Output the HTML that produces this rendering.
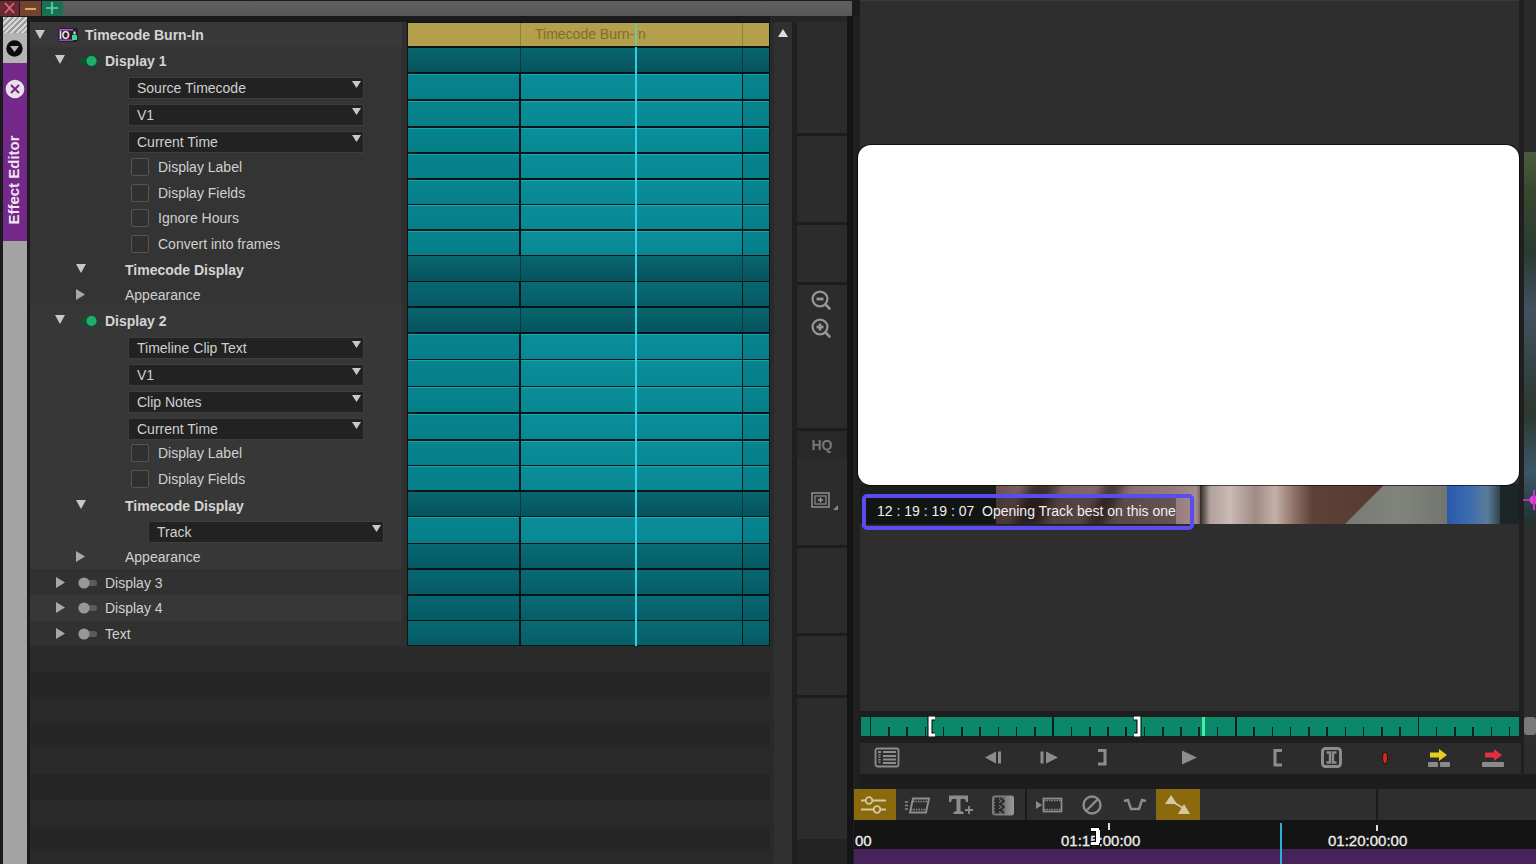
<!DOCTYPE html><html><head><meta charset="utf-8"><style>
html,body{margin:0;padding:0;width:1536px;height:864px;overflow:hidden;background:#1c1c1c;font-family:"Liberation Sans", sans-serif;}
div,svg{box-sizing:border-box}
</style></head><body>
<div style="position:absolute;left:0px;top:0px;width:860px;height:22px;background:#1b1b1b"></div>
<div style="position:absolute;left:0px;top:1px;width:19px;height:15px;background:#6c2933"></div>
<svg style="position:absolute;left:3px;top:2px" width="13" height="12"><path d="M2,1 L11,11 M11,1 L2,11" stroke="#d86a74" stroke-width="1.8"/></svg>
<div style="position:absolute;left:20px;top:1px;width:21px;height:15px;background:#70442f"></div>
<div style="position:absolute;left:25px;top:8px;width:11px;height:2px;background:#e8a070"></div>
<div style="position:absolute;left:42px;top:1px;width:21px;height:15px;background:#1a7055"></div>
<svg style="position:absolute;left:45px;top:1px" width="14" height="14"><path d="M7,1 L7,13 M1,7 L13,7" stroke="#5ed6a6" stroke-width="1.6"/></svg>
<div style="position:absolute;left:63px;top:1px;width:789px;height:15px;background:linear-gradient(#616161,#575757)"></div>
<div style="position:absolute;left:0px;top:16px;width:30px;height:848px;background:#1a1a1a"></div>
<div style="position:absolute;left:3px;top:17px;width:24px;height:16px;background:repeating-linear-gradient(135deg,#d6d6d6 0 2px,#9a9a9a 2px 4px)"></div>
<div style="position:absolute;left:3px;top:33px;width:24px;height:30px;background:#b4b4b4"></div>
<svg style="position:absolute;left:6px;top:40px" width="17" height="17"><circle cx="8.5" cy="8.5" r="8.2" fill="#0c0c0c"/><polygon points="4,6 13,6 8.5,12" fill="#b8b8b8"/></svg>
<div style="position:absolute;left:3px;top:63px;width:24px;height:178px;background:#74288a"></div>
<svg style="position:absolute;left:5px;top:79px" width="20" height="20"><circle cx="10" cy="10" r="9.3" fill="#e8e0ea"/><path d="M6,6 L14,14 M14,6 L6,14" stroke="#74288a" stroke-width="2"/></svg>
<div style="position:absolute;left:13.8px;top:179.5px;width:0;height:0"><div style="position:absolute;left:0;top:0;transform:translate(-50%,-50%) rotate(-90deg);font-size:15px;font-weight:bold;color:#efe6f2;white-space:nowrap;line-height:16px">Effect Editor</div></div>
<div style="position:absolute;left:3px;top:241px;width:24px;height:623px;background:#a3a3a3"></div>
<div style="position:absolute;left:30px;top:22px;width:377px;height:624px;background:#343434"></div>
<div style="position:absolute;left:30px;top:22px;width:377px;height:25px;background:#383838"></div>
<div style="position:absolute;left:30px;top:305px;width:377px;height:264px;background:#373737"></div>
<div style="position:absolute;left:30px;top:569px;width:377px;height:26px;background:#313131"></div>
<div style="position:absolute;left:30px;top:595px;width:377px;height:26px;background:#373737"></div>
<div style="position:absolute;left:30px;top:621px;width:377px;height:25px;background:#313131"></div>
<div style="position:absolute;left:30px;top:646px;width:742px;height:26px;background:#2a2a2a"></div>
<div style="position:absolute;left:30px;top:671.6px;width:742px;height:26px;background:#262626"></div>
<div style="position:absolute;left:30px;top:697.2px;width:742px;height:26px;background:#2a2a2a"></div>
<div style="position:absolute;left:30px;top:722.8000000000001px;width:742px;height:26px;background:#262626"></div>
<div style="position:absolute;left:30px;top:748.4000000000001px;width:742px;height:26px;background:#2a2a2a"></div>
<div style="position:absolute;left:30px;top:774.0000000000001px;width:742px;height:26px;background:#262626"></div>
<div style="position:absolute;left:30px;top:799.6000000000001px;width:742px;height:26px;background:#2a2a2a"></div>
<div style="position:absolute;left:30px;top:825.2000000000002px;width:742px;height:26px;background:#262626"></div>
<div style="position:absolute;left:30px;top:850.8000000000002px;width:742px;height:26px;background:#2a2a2a"></div>
<div style="position:absolute;left:402px;top:22px;width:5px;height:624px;background:#2f2f2f"></div>
<svg style="position:absolute;left:35px;top:29.5px" width="10" height="9"><polygon points="0,0 10,0 5.0,9" fill="#c8c8c8"/></svg>
<svg style="position:absolute;left:57px;top:27px" width="22" height="16"><rect x="1" y="1" width="20" height="14" rx="2" fill="#2a1c30"/><rect x="2" y="2" width="14" height="1.5" fill="#b060c0"/><rect x="2" y="12.5" width="14" height="1.5" fill="#9050a8"/><text x="2" y="11.5" font-family="Liberation Sans" font-weight="bold" font-size="10" fill="#f0e8f0">IO</text><rect x="15" y="8" width="5" height="5" fill="#30e080"/><rect x="16.5" y="4.5" width="2" height="3" fill="#ddd"/></svg>
<div style="position:absolute;left:85px;top:25.0px;height:20px;line-height:20px;font-size:14px;font-weight:bold;color:#d4d4d4;white-space:nowrap;">Timecode Burn-In</div>
<svg style="position:absolute;left:55px;top:55px" width="10" height="9"><polygon points="0,0 10,0 5.0,9" fill="#c8c8c8"/></svg>
<svg style="position:absolute;left:77px;top:53.5px" width="22" height="14"><rect x="2" y="4.5" width="12" height="5" rx="2.5" fill="#0c5230"/><circle cx="14.5" cy="7" r="5.8" fill="#0a5a32"/><circle cx="14.5" cy="7" r="5" fill="#1eae6a"/></svg>
<div style="position:absolute;left:105px;top:50.5px;height:20px;line-height:20px;font-size:14px;font-weight:bold;color:#d4d4d4;white-space:nowrap;">Display 1</div>
<div style="position:absolute;left:128px;top:77px;width:236px;height:22px;background:#222;border:1px solid #3d3d3d;"></div>
<div style="position:absolute;left:137px;top:77.8px;height:20px;line-height:20px;font-size:14px;font-weight:normal;color:#d0d0d0;white-space:nowrap;">Source Timecode</div>
<svg style="position:absolute;left:352px;top:81px" width="9" height="7"><polygon points="0,0 9,0 4.5,7" fill="#c8c8c8"/></svg>
<div style="position:absolute;left:128px;top:104px;width:236px;height:22px;background:#222;border:1px solid #3d3d3d;"></div>
<div style="position:absolute;left:137px;top:104.8px;height:20px;line-height:20px;font-size:14px;font-weight:normal;color:#d0d0d0;white-space:nowrap;">V1</div>
<svg style="position:absolute;left:352px;top:108px" width="9" height="7"><polygon points="0,0 9,0 4.5,7" fill="#c8c8c8"/></svg>
<div style="position:absolute;left:128px;top:131px;width:236px;height:22px;background:#222;border:1px solid #3d3d3d;"></div>
<div style="position:absolute;left:137px;top:131.8px;height:20px;line-height:20px;font-size:14px;font-weight:normal;color:#d0d0d0;white-space:nowrap;">Current Time</div>
<svg style="position:absolute;left:352px;top:135px" width="9" height="7"><polygon points="0,0 9,0 4.5,7" fill="#c8c8c8"/></svg>
<div style="position:absolute;left:131px;top:158px;width:18px;height:18px;border:1.5px solid #555;border-radius:2px;background:#303030"></div>
<div style="position:absolute;left:158px;top:157.0px;height:20px;line-height:20px;font-size:14px;font-weight:normal;color:#d0d0d0;white-space:nowrap;">Display Label</div>
<div style="position:absolute;left:131px;top:184px;width:18px;height:18px;border:1.5px solid #555;border-radius:2px;background:#303030"></div>
<div style="position:absolute;left:158px;top:183.0px;height:20px;line-height:20px;font-size:14px;font-weight:normal;color:#d0d0d0;white-space:nowrap;">Display Fields</div>
<div style="position:absolute;left:131px;top:209px;width:18px;height:18px;border:1.5px solid #555;border-radius:2px;background:#303030"></div>
<div style="position:absolute;left:158px;top:208.0px;height:20px;line-height:20px;font-size:14px;font-weight:normal;color:#d0d0d0;white-space:nowrap;">Ignore Hours</div>
<div style="position:absolute;left:131px;top:235px;width:18px;height:18px;border:1.5px solid #555;border-radius:2px;background:#303030"></div>
<div style="position:absolute;left:158px;top:234.0px;height:20px;line-height:20px;font-size:14px;font-weight:normal;color:#d0d0d0;white-space:nowrap;">Convert into frames</div>
<svg style="position:absolute;left:76px;top:264px" width="10" height="9"><polygon points="0,0 10,0 5.0,9" fill="#c8c8c8"/></svg>
<div style="position:absolute;left:125px;top:260.0px;height:20px;line-height:20px;font-size:14px;font-weight:bold;color:#d4d4d4;white-space:nowrap;">Timecode Display</div>
<svg style="position:absolute;left:76px;top:289px" width="9" height="11"><polygon points="0,0 9,5.5 0,11" fill="#a8a8a8"/></svg>
<div style="position:absolute;left:125px;top:285.0px;height:20px;line-height:20px;font-size:14px;font-weight:normal;color:#d0d0d0;white-space:nowrap;">Appearance</div>
<svg style="position:absolute;left:55px;top:315px" width="10" height="9"><polygon points="0,0 10,0 5.0,9" fill="#c8c8c8"/></svg>
<svg style="position:absolute;left:77px;top:313.5px" width="22" height="14"><rect x="2" y="4.5" width="12" height="5" rx="2.5" fill="#0c5230"/><circle cx="14.5" cy="7" r="5.8" fill="#0a5a32"/><circle cx="14.5" cy="7" r="5" fill="#1eae6a"/></svg>
<div style="position:absolute;left:105px;top:310.5px;height:20px;line-height:20px;font-size:14px;font-weight:bold;color:#d4d4d4;white-space:nowrap;">Display 2</div>
<div style="position:absolute;left:128px;top:337px;width:236px;height:22px;background:#222;border:1px solid #3d3d3d;"></div>
<div style="position:absolute;left:137px;top:337.8px;height:20px;line-height:20px;font-size:14px;font-weight:normal;color:#d0d0d0;white-space:nowrap;">Timeline Clip Text</div>
<svg style="position:absolute;left:352px;top:341px" width="9" height="7"><polygon points="0,0 9,0 4.5,7" fill="#c8c8c8"/></svg>
<div style="position:absolute;left:128px;top:364px;width:236px;height:22px;background:#222;border:1px solid #3d3d3d;"></div>
<div style="position:absolute;left:137px;top:364.8px;height:20px;line-height:20px;font-size:14px;font-weight:normal;color:#d0d0d0;white-space:nowrap;">V1</div>
<svg style="position:absolute;left:352px;top:368px" width="9" height="7"><polygon points="0,0 9,0 4.5,7" fill="#c8c8c8"/></svg>
<div style="position:absolute;left:128px;top:391px;width:236px;height:22px;background:#222;border:1px solid #3d3d3d;"></div>
<div style="position:absolute;left:137px;top:391.8px;height:20px;line-height:20px;font-size:14px;font-weight:normal;color:#d0d0d0;white-space:nowrap;">Clip Notes</div>
<svg style="position:absolute;left:352px;top:395px" width="9" height="7"><polygon points="0,0 9,0 4.5,7" fill="#c8c8c8"/></svg>
<div style="position:absolute;left:128px;top:418px;width:236px;height:22px;background:#222;border:1px solid #3d3d3d;"></div>
<div style="position:absolute;left:137px;top:418.8px;height:20px;line-height:20px;font-size:14px;font-weight:normal;color:#d0d0d0;white-space:nowrap;">Current Time</div>
<svg style="position:absolute;left:352px;top:422px" width="9" height="7"><polygon points="0,0 9,0 4.5,7" fill="#c8c8c8"/></svg>
<div style="position:absolute;left:131px;top:444px;width:18px;height:18px;border:1.5px solid #555;border-radius:2px;background:#303030"></div>
<div style="position:absolute;left:158px;top:443.0px;height:20px;line-height:20px;font-size:14px;font-weight:normal;color:#d0d0d0;white-space:nowrap;">Display Label</div>
<div style="position:absolute;left:131px;top:470px;width:18px;height:18px;border:1.5px solid #555;border-radius:2px;background:#303030"></div>
<div style="position:absolute;left:158px;top:469.0px;height:20px;line-height:20px;font-size:14px;font-weight:normal;color:#d0d0d0;white-space:nowrap;">Display Fields</div>
<svg style="position:absolute;left:76px;top:500px" width="10" height="9"><polygon points="0,0 10,0 5.0,9" fill="#c8c8c8"/></svg>
<div style="position:absolute;left:125px;top:496.0px;height:20px;line-height:20px;font-size:14px;font-weight:bold;color:#d4d4d4;white-space:nowrap;">Timecode Display</div>
<div style="position:absolute;left:148px;top:521px;width:236px;height:22px;background:#222;border:1px solid #3d3d3d;"></div>
<div style="position:absolute;left:157px;top:521.8px;height:20px;line-height:20px;font-size:14px;font-weight:normal;color:#d0d0d0;white-space:nowrap;">Track</div>
<svg style="position:absolute;left:372px;top:525px" width="9" height="7"><polygon points="0,0 9,0 4.5,7" fill="#c8c8c8"/></svg>
<svg style="position:absolute;left:76px;top:551px" width="9" height="11"><polygon points="0,0 9,5.5 0,11" fill="#a8a8a8"/></svg>
<div style="position:absolute;left:125px;top:547.0px;height:20px;line-height:20px;font-size:14px;font-weight:normal;color:#d0d0d0;white-space:nowrap;">Appearance</div>
<svg style="position:absolute;left:56px;top:577px" width="9" height="11"><polygon points="0,0 9,5.5 0,11" fill="#a8a8a8"/></svg>
<svg style="position:absolute;left:77px;top:576px" width="22" height="14"><rect x="8" y="4" width="12" height="6" rx="2.5" fill="#5a5a5a"/><circle cx="7" cy="7" r="5.6" fill="#979797"/></svg>
<div style="position:absolute;left:105px;top:573.0px;height:20px;line-height:20px;font-size:14px;font-weight:normal;color:#d0d0d0;white-space:nowrap;">Display 3</div>
<svg style="position:absolute;left:56px;top:602px" width="9" height="11"><polygon points="0,0 9,5.5 0,11" fill="#a8a8a8"/></svg>
<svg style="position:absolute;left:77px;top:601px" width="22" height="14"><rect x="8" y="4" width="12" height="6" rx="2.5" fill="#5a5a5a"/><circle cx="7" cy="7" r="5.6" fill="#979797"/></svg>
<div style="position:absolute;left:105px;top:598.0px;height:20px;line-height:20px;font-size:14px;font-weight:normal;color:#d0d0d0;white-space:nowrap;">Display 4</div>
<svg style="position:absolute;left:56px;top:628px" width="9" height="11"><polygon points="0,0 9,5.5 0,11" fill="#a8a8a8"/></svg>
<svg style="position:absolute;left:77px;top:627px" width="22" height="14"><rect x="8" y="4" width="12" height="6" rx="2.5" fill="#5a5a5a"/><circle cx="7" cy="7" r="5.6" fill="#979797"/></svg>
<div style="position:absolute;left:105px;top:624.0px;height:20px;line-height:20px;font-size:14px;font-weight:normal;color:#d0d0d0;white-space:nowrap;">Text</div>
<div style="position:absolute;left:407px;top:22px;width:363px;height:624px;background:#0b1416"></div>
<div style="position:absolute;left:408px;top:23px;width:361px;height:23px;background:#b39f4c"></div>
<div style="position:absolute;left:520px;top:23px;width:1px;height:23px;background:#8f7f3c"></div>
<div style="position:absolute;left:742px;top:23px;width:1px;height:23px;background:#8f7f3c"></div>
<div style="position:absolute;left:408px;top:48px;width:111px;height:24px;background:linear-gradient(#08646e,#05525c)"></div>
<div style="position:absolute;left:521px;top:48px;width:221px;height:24px;background:linear-gradient(#08646e,#05525c)"></div>
<div style="position:absolute;left:743px;top:48px;width:26px;height:24px;background:linear-gradient(#08646e,#05525c)"></div>
<div style="position:absolute;left:408px;top:48px;width:361px;height:24px;background:linear-gradient(#09666f,#05535d)"></div>
<div style="position:absolute;left:520px;top:48px;width:1px;height:24px;background:#0a3a40"></div>
<div style="position:absolute;left:742px;top:48px;width:1px;height:24px;background:#0a3a40"></div>
<div style="position:absolute;left:408px;top:74px;width:111px;height:25px;background:linear-gradient(#16a2ae 0,#16a2ae 1px,#08848e 1px,#057e88)"></div>
<div style="position:absolute;left:521px;top:74px;width:221px;height:25px;background:linear-gradient(#18aab6 0,#18aab6 1px,#0a8e9a 1px,#088893)"></div>
<div style="position:absolute;left:743px;top:74px;width:26px;height:25px;background:linear-gradient(#16a2ae 0,#16a2ae 1px,#08848e 1px,#057e88)"></div>
<div style="position:absolute;left:408px;top:101px;width:111px;height:25px;background:linear-gradient(#16a2ae 0,#16a2ae 1px,#08848e 1px,#057e88)"></div>
<div style="position:absolute;left:521px;top:101px;width:221px;height:25px;background:linear-gradient(#18aab6 0,#18aab6 1px,#0a8e9a 1px,#088893)"></div>
<div style="position:absolute;left:743px;top:101px;width:26px;height:25px;background:linear-gradient(#16a2ae 0,#16a2ae 1px,#08848e 1px,#057e88)"></div>
<div style="position:absolute;left:408px;top:128px;width:111px;height:24px;background:linear-gradient(#16a2ae 0,#16a2ae 1px,#08848e 1px,#057e88)"></div>
<div style="position:absolute;left:521px;top:128px;width:221px;height:24px;background:linear-gradient(#18aab6 0,#18aab6 1px,#0a8e9a 1px,#088893)"></div>
<div style="position:absolute;left:743px;top:128px;width:26px;height:24px;background:linear-gradient(#16a2ae 0,#16a2ae 1px,#08848e 1px,#057e88)"></div>
<div style="position:absolute;left:408px;top:154px;width:111px;height:24px;background:linear-gradient(#16a2ae 0,#16a2ae 1px,#08848e 1px,#057e88)"></div>
<div style="position:absolute;left:521px;top:154px;width:221px;height:24px;background:linear-gradient(#18aab6 0,#18aab6 1px,#0a8e9a 1px,#088893)"></div>
<div style="position:absolute;left:743px;top:154px;width:26px;height:24px;background:linear-gradient(#16a2ae 0,#16a2ae 1px,#08848e 1px,#057e88)"></div>
<div style="position:absolute;left:408px;top:180px;width:111px;height:24px;background:linear-gradient(#16a2ae 0,#16a2ae 1px,#08848e 1px,#057e88)"></div>
<div style="position:absolute;left:521px;top:180px;width:221px;height:24px;background:linear-gradient(#18aab6 0,#18aab6 1px,#0a8e9a 1px,#088893)"></div>
<div style="position:absolute;left:743px;top:180px;width:26px;height:24px;background:linear-gradient(#16a2ae 0,#16a2ae 1px,#08848e 1px,#057e88)"></div>
<div style="position:absolute;left:408px;top:205px;width:111px;height:24px;background:linear-gradient(#16a2ae 0,#16a2ae 1px,#08848e 1px,#057e88)"></div>
<div style="position:absolute;left:521px;top:205px;width:221px;height:24px;background:linear-gradient(#18aab6 0,#18aab6 1px,#0a8e9a 1px,#088893)"></div>
<div style="position:absolute;left:743px;top:205px;width:26px;height:24px;background:linear-gradient(#16a2ae 0,#16a2ae 1px,#08848e 1px,#057e88)"></div>
<div style="position:absolute;left:408px;top:231px;width:111px;height:24px;background:linear-gradient(#16a2ae 0,#16a2ae 1px,#08848e 1px,#057e88)"></div>
<div style="position:absolute;left:521px;top:231px;width:221px;height:24px;background:linear-gradient(#18aab6 0,#18aab6 1px,#0a8e9a 1px,#088893)"></div>
<div style="position:absolute;left:743px;top:231px;width:26px;height:24px;background:linear-gradient(#16a2ae 0,#16a2ae 1px,#08848e 1px,#057e88)"></div>
<div style="position:absolute;left:408px;top:256px;width:111px;height:25px;background:linear-gradient(#08646e,#05525c)"></div>
<div style="position:absolute;left:521px;top:256px;width:221px;height:25px;background:linear-gradient(#08646e,#05525c)"></div>
<div style="position:absolute;left:743px;top:256px;width:26px;height:25px;background:linear-gradient(#08646e,#05525c)"></div>
<div style="position:absolute;left:408px;top:256px;width:361px;height:25px;background:linear-gradient(#09666f,#05535d)"></div>
<div style="position:absolute;left:520px;top:256px;width:1px;height:25px;background:#0a3a40"></div>
<div style="position:absolute;left:742px;top:256px;width:1px;height:25px;background:#0a3a40"></div>
<div style="position:absolute;left:408px;top:282px;width:111px;height:24px;background:linear-gradient(#0a656e 0,#0a656e 1px,#076770 1px,#055a64)"></div>
<div style="position:absolute;left:521px;top:282px;width:221px;height:24px;background:linear-gradient(#0c6a74 0,#0c6a74 1px,#086a74 1px,#065e68)"></div>
<div style="position:absolute;left:743px;top:282px;width:26px;height:24px;background:linear-gradient(#0a656e 0,#0a656e 1px,#076770 1px,#055a64)"></div>
<div style="position:absolute;left:408px;top:308px;width:111px;height:24px;background:linear-gradient(#08646e,#05525c)"></div>
<div style="position:absolute;left:521px;top:308px;width:221px;height:24px;background:linear-gradient(#08646e,#05525c)"></div>
<div style="position:absolute;left:743px;top:308px;width:26px;height:24px;background:linear-gradient(#08646e,#05525c)"></div>
<div style="position:absolute;left:408px;top:308px;width:361px;height:24px;background:linear-gradient(#09666f,#05535d)"></div>
<div style="position:absolute;left:520px;top:308px;width:1px;height:24px;background:#0a3a40"></div>
<div style="position:absolute;left:742px;top:308px;width:1px;height:24px;background:#0a3a40"></div>
<div style="position:absolute;left:408px;top:334px;width:111px;height:25px;background:linear-gradient(#16a2ae 0,#16a2ae 1px,#08848e 1px,#057e88)"></div>
<div style="position:absolute;left:521px;top:334px;width:221px;height:25px;background:linear-gradient(#18aab6 0,#18aab6 1px,#0a8e9a 1px,#088893)"></div>
<div style="position:absolute;left:743px;top:334px;width:26px;height:25px;background:linear-gradient(#16a2ae 0,#16a2ae 1px,#08848e 1px,#057e88)"></div>
<div style="position:absolute;left:408px;top:360px;width:111px;height:26px;background:linear-gradient(#16a2ae 0,#16a2ae 1px,#08848e 1px,#057e88)"></div>
<div style="position:absolute;left:521px;top:360px;width:221px;height:26px;background:linear-gradient(#18aab6 0,#18aab6 1px,#0a8e9a 1px,#088893)"></div>
<div style="position:absolute;left:743px;top:360px;width:26px;height:26px;background:linear-gradient(#16a2ae 0,#16a2ae 1px,#08848e 1px,#057e88)"></div>
<div style="position:absolute;left:408px;top:387px;width:111px;height:25px;background:linear-gradient(#16a2ae 0,#16a2ae 1px,#08848e 1px,#057e88)"></div>
<div style="position:absolute;left:521px;top:387px;width:221px;height:25px;background:linear-gradient(#18aab6 0,#18aab6 1px,#0a8e9a 1px,#088893)"></div>
<div style="position:absolute;left:743px;top:387px;width:26px;height:25px;background:linear-gradient(#16a2ae 0,#16a2ae 1px,#08848e 1px,#057e88)"></div>
<div style="position:absolute;left:408px;top:414px;width:111px;height:25px;background:linear-gradient(#16a2ae 0,#16a2ae 1px,#08848e 1px,#057e88)"></div>
<div style="position:absolute;left:521px;top:414px;width:221px;height:25px;background:linear-gradient(#18aab6 0,#18aab6 1px,#0a8e9a 1px,#088893)"></div>
<div style="position:absolute;left:743px;top:414px;width:26px;height:25px;background:linear-gradient(#16a2ae 0,#16a2ae 1px,#08848e 1px,#057e88)"></div>
<div style="position:absolute;left:408px;top:441px;width:111px;height:24px;background:linear-gradient(#16a2ae 0,#16a2ae 1px,#08848e 1px,#057e88)"></div>
<div style="position:absolute;left:521px;top:441px;width:221px;height:24px;background:linear-gradient(#18aab6 0,#18aab6 1px,#0a8e9a 1px,#088893)"></div>
<div style="position:absolute;left:743px;top:441px;width:26px;height:24px;background:linear-gradient(#16a2ae 0,#16a2ae 1px,#08848e 1px,#057e88)"></div>
<div style="position:absolute;left:408px;top:466px;width:111px;height:24px;background:linear-gradient(#16a2ae 0,#16a2ae 1px,#08848e 1px,#057e88)"></div>
<div style="position:absolute;left:521px;top:466px;width:221px;height:24px;background:linear-gradient(#18aab6 0,#18aab6 1px,#0a8e9a 1px,#088893)"></div>
<div style="position:absolute;left:743px;top:466px;width:26px;height:24px;background:linear-gradient(#16a2ae 0,#16a2ae 1px,#08848e 1px,#057e88)"></div>
<div style="position:absolute;left:408px;top:492px;width:111px;height:24px;background:linear-gradient(#08646e,#05525c)"></div>
<div style="position:absolute;left:521px;top:492px;width:221px;height:24px;background:linear-gradient(#08646e,#05525c)"></div>
<div style="position:absolute;left:743px;top:492px;width:26px;height:24px;background:linear-gradient(#08646e,#05525c)"></div>
<div style="position:absolute;left:408px;top:492px;width:361px;height:24px;background:linear-gradient(#09666f,#05535d)"></div>
<div style="position:absolute;left:520px;top:492px;width:1px;height:24px;background:#0a3a40"></div>
<div style="position:absolute;left:742px;top:492px;width:1px;height:24px;background:#0a3a40"></div>
<div style="position:absolute;left:408px;top:517px;width:111px;height:26px;background:linear-gradient(#16a2ae 0,#16a2ae 1px,#08848e 1px,#057e88)"></div>
<div style="position:absolute;left:521px;top:517px;width:221px;height:26px;background:linear-gradient(#18aab6 0,#18aab6 1px,#0a8e9a 1px,#088893)"></div>
<div style="position:absolute;left:743px;top:517px;width:26px;height:26px;background:linear-gradient(#16a2ae 0,#16a2ae 1px,#08848e 1px,#057e88)"></div>
<div style="position:absolute;left:408px;top:544px;width:111px;height:24px;background:linear-gradient(#0a656e 0,#0a656e 1px,#076770 1px,#055a64)"></div>
<div style="position:absolute;left:521px;top:544px;width:221px;height:24px;background:linear-gradient(#0c6a74 0,#0c6a74 1px,#086a74 1px,#065e68)"></div>
<div style="position:absolute;left:743px;top:544px;width:26px;height:24px;background:linear-gradient(#0a656e 0,#0a656e 1px,#076770 1px,#055a64)"></div>
<div style="position:absolute;left:408px;top:570px;width:111px;height:24px;background:linear-gradient(#0a656e 0,#0a656e 1px,#076770 1px,#055a64)"></div>
<div style="position:absolute;left:521px;top:570px;width:221px;height:24px;background:linear-gradient(#0c6a74 0,#0c6a74 1px,#086a74 1px,#065e68)"></div>
<div style="position:absolute;left:743px;top:570px;width:26px;height:24px;background:linear-gradient(#0a656e 0,#0a656e 1px,#076770 1px,#055a64)"></div>
<div style="position:absolute;left:408px;top:596px;width:111px;height:24px;background:linear-gradient(#0a656e 0,#0a656e 1px,#076770 1px,#055a64)"></div>
<div style="position:absolute;left:521px;top:596px;width:221px;height:24px;background:linear-gradient(#0c6a74 0,#0c6a74 1px,#086a74 1px,#065e68)"></div>
<div style="position:absolute;left:743px;top:596px;width:26px;height:24px;background:linear-gradient(#0a656e 0,#0a656e 1px,#076770 1px,#055a64)"></div>
<div style="position:absolute;left:408px;top:621px;width:111px;height:24px;background:linear-gradient(#0a656e 0,#0a656e 1px,#076770 1px,#055a64)"></div>
<div style="position:absolute;left:521px;top:621px;width:221px;height:24px;background:linear-gradient(#0c6a74 0,#0c6a74 1px,#086a74 1px,#065e68)"></div>
<div style="position:absolute;left:743px;top:621px;width:26px;height:24px;background:linear-gradient(#0a656e 0,#0a656e 1px,#076770 1px,#055a64)"></div>
<div style="position:absolute;left:535px;top:24.0px;height:20px;line-height:20px;font-size:14px;font-weight:normal;color:#7e6e30;white-space:nowrap;">Timecode Burn-In</div>
<div style="position:absolute;left:635px;top:23px;width:2px;height:23px;background:#7cc0a0"></div>
<div style="position:absolute;left:635px;top:47px;width:2px;height:599px;background:#2ed0e8"></div>
<div style="position:absolute;left:770px;top:16px;width:90px;height:848px;background:#252525"></div>
<div style="position:absolute;left:770px;top:22px;width:4px;height:842px;background:#2a2a2a"></div>
<div style="position:absolute;left:774px;top:22px;width:18px;height:842px;background:#303030"></div>
<svg style="position:absolute;left:778px;top:29px" width="10" height="9"><polygon points="5,0 10,8 0,8" fill="#dcdcdc"/></svg>
<div style="position:absolute;left:792px;top:22px;width:5px;height:842px;background:#1f1f1f"></div>
<div style="position:absolute;left:797px;top:22px;width:50px;height:842px;background:#2c2c2c"></div>
<div style="position:absolute;left:797px;top:133px;width:50px;height:3px;background:#1d1d1d"></div>
<div style="position:absolute;left:797px;top:222px;width:50px;height:3px;background:#1d1d1d"></div>
<div style="position:absolute;left:797px;top:282px;width:50px;height:3px;background:#1d1d1d"></div>
<div style="position:absolute;left:797px;top:428px;width:50px;height:3px;background:#1d1d1d"></div>
<div style="position:absolute;left:797px;top:545px;width:50px;height:3px;background:#1d1d1d"></div>
<div style="position:absolute;left:797px;top:633px;width:50px;height:3px;background:#1d1d1d"></div>
<div style="position:absolute;left:797px;top:695px;width:50px;height:3px;background:#1d1d1d"></div>
<div style="position:absolute;left:797px;top:431px;width:50px;height:28px;background:#282828"></div>
<div style="position:absolute;left:797px;top:436px;width:50px;text-align:center;font-size:14px;font-weight:bold;color:#777;line-height:18px">HQ</div>
<div style="position:absolute;left:797px;top:839px;width:50px;height:25px;background:#232323"></div>
<svg style="position:absolute;left:811px;top:290px" width="22" height="22"><circle cx="9" cy="9" r="7.4" fill="none" stroke="#969696" stroke-width="2.3"/><path d="M5.5,9 L12.5,9" stroke="#969696" stroke-width="2.8"/><path d="M14.5,14.5 L18.5,18.5" stroke="#969696" stroke-width="2.6" stroke-linecap="round"/></svg>
<svg style="position:absolute;left:811px;top:318px" width="22" height="22"><circle cx="9" cy="9" r="7.4" fill="none" stroke="#969696" stroke-width="2.3"/><path d="M5.5,9 L12.5,9" stroke="#969696" stroke-width="2.8"/><path d="M9,5.5 L9,12.5" stroke="#969696" stroke-width="2.8"/><path d="M14.5,14.5 L18.5,18.5" stroke="#969696" stroke-width="2.6" stroke-linecap="round"/></svg>
<svg style="position:absolute;left:810px;top:491px" width="32" height="20"><rect x="2" y="2" width="17" height="14" fill="none" stroke="#8a8a8a" stroke-width="1.6"/><rect x="5" y="5" width="11" height="8" fill="none" stroke="#8a8a8a" stroke-width="1.2"/><path d="M10.5,6.5 L10.5,11.5 M8,9 L13,9" stroke="#9a9a9a" stroke-width="1.4"/><polygon points="28,14 28,19 23,19" fill="#8a8a8a"/></svg>
<div style="position:absolute;left:847px;top:16px;width:6px;height:848px;background:#151515"></div>
<div style="position:absolute;left:853px;top:16px;width:7px;height:848px;background:#202020"></div>
<div style="position:absolute;left:860px;top:0px;width:676px;height:864px;background:#2e2e2e"></div>
<div style="position:absolute;left:860px;top:0px;width:676px;height:1px;background:#3a3a3a"></div>
<div style="position:absolute;left:860px;top:484px;width:661px;height:40px;overflow:hidden;background:#1b1f1c"><div style="position:absolute;left:136px;top:0;width:210px;height:40px;background:linear-gradient(90deg,#6a5050 0,#806668 30px,#76605e 60px,#8a7070 140px,#947a7a 175px,#a48c8c 200px,#3a2e2a 210px)"></div><div style="position:absolute;left:160px;top:-5px;width:30px;height:50px;background:#3a2c2a;filter:blur(6px);transform:skewX(-20deg)"></div><div style="position:absolute;left:235px;top:-5px;width:20px;height:50px;background:#4a3a36;filter:blur(5px);transform:skewX(-25deg)"></div><div style="position:absolute;left:340px;top:0;width:190px;height:40px;background:linear-gradient(90deg,#2e2824 0,#b0a09c 10px,#cbbab6 30px,#a08a84 55px,#c4b0a8 75px,#8c6e64 95px,#5e4238 112px,#56392f 190px)"></div><div style="position:absolute;left:0;top:0;width:587px;height:40px;background:linear-gradient(90deg,#767a72 480px,#80847c 540px,#727670 587px);clip-path:polygon(525px 0,100% 0,100% 100%,485px 100%)"></div><div style="position:absolute;left:587px;top:0;width:55px;height:40px;background:linear-gradient(90deg,#2a5aaa 0,#3a6ab0 20px,#5a7c9a 40px,#2a3c40 55px)"></div><div style="position:absolute;left:640px;top:0;width:21px;height:40px;background:#1c2626"></div></div>
<div style="position:absolute;left:1524px;top:152px;width:12px;height:372px;background:linear-gradient(#4a5c3e 0,#38482e 40px,#2c3a34 100px,#445260 160px,#2c3830 260px,#3a5868 320px,#203030 372px)"></div>
<div style="position:absolute;left:1519px;top:0px;width:5px;height:774px;background:#1f1f1f"></div>
<div style="position:absolute;left:1524px;top:0px;width:12px;height:152px;background:#2b2b2b"></div>
<svg style="position:absolute;left:1522px;top:488px" width="14" height="24"><path d="M1,12 L13,12" stroke="#d030c8" stroke-width="1.6"/><circle cx="12" cy="12" r="4.5" fill="#e040d8"/><path d="M12,2 L12,22" stroke="#d030c8" stroke-width="2"/></svg>
<div style="position:absolute;left:857px;top:144px;width:663px;height:342px;border-radius:14px;background:#000;opacity:0.6"></div>
<div style="position:absolute;left:858px;top:145px;width:661px;height:340px;border-radius:13px;background:#fff"></div>
<div style="position:absolute;left:866px;top:498px;width:310px;height:27px;background:rgba(0,0,0,0.32)"></div>
<div style="position:absolute;left:862px;top:494px;width:332px;height:36px;border:4.5px solid #5a4cf0;border-radius:5px"></div>
<div style="position:absolute;left:877px;top:501.0px;height:20px;line-height:20px;font-size:14px;font-weight:normal;color:#f0f0f0;white-space:nowrap;">12 : 19 : 19 : 07</div>
<div style="position:absolute;left:982px;top:501.0px;height:20px;line-height:20px;font-size:14px;font-weight:normal;color:#f0f0f0;white-space:nowrap;">Opening Track best on this one</div>
<div style="position:absolute;left:860px;top:711px;width:661px;height:32px;background:#1e1e1e"></div>
<div style="position:absolute;left:861px;top:717px;width:658px;height:19px;background:#0b876a"></div>
<div style="position:absolute;left:869.8000000000001px;top:717px;width:1.6px;height:19px;background:#04201a"></div>
<div style="position:absolute;left:888.0600000000001px;top:727px;width:1.6px;height:9px;background:#04201a"></div>
<div style="position:absolute;left:906.32px;top:727px;width:1.6px;height:9px;background:#04201a"></div>
<div style="position:absolute;left:924.58px;top:727px;width:1.6px;height:9px;background:#04201a"></div>
<div style="position:absolute;left:942.84px;top:727px;width:1.6px;height:9px;background:#04201a"></div>
<div style="position:absolute;left:961.1000000000001px;top:727px;width:1.6px;height:9px;background:#04201a"></div>
<div style="position:absolute;left:979.3600000000001px;top:727px;width:1.6px;height:9px;background:#04201a"></div>
<div style="position:absolute;left:997.6200000000001px;top:727px;width:1.6px;height:9px;background:#04201a"></div>
<div style="position:absolute;left:1015.8800000000001px;top:727px;width:1.6px;height:9px;background:#04201a"></div>
<div style="position:absolute;left:1034.14px;top:727px;width:1.6px;height:9px;background:#04201a"></div>
<div style="position:absolute;left:1052.4px;top:717px;width:1.6px;height:19px;background:#04201a"></div>
<div style="position:absolute;left:1070.66px;top:727px;width:1.6px;height:9px;background:#04201a"></div>
<div style="position:absolute;left:1088.92px;top:727px;width:1.6px;height:9px;background:#04201a"></div>
<div style="position:absolute;left:1107.18px;top:727px;width:1.6px;height:9px;background:#04201a"></div>
<div style="position:absolute;left:1125.44px;top:727px;width:1.6px;height:9px;background:#04201a"></div>
<div style="position:absolute;left:1143.7px;top:727px;width:1.6px;height:9px;background:#04201a"></div>
<div style="position:absolute;left:1161.96px;top:727px;width:1.6px;height:9px;background:#04201a"></div>
<div style="position:absolute;left:1180.22px;top:727px;width:1.6px;height:9px;background:#04201a"></div>
<div style="position:absolute;left:1198.48px;top:727px;width:1.6px;height:9px;background:#04201a"></div>
<div style="position:absolute;left:1216.74px;top:727px;width:1.6px;height:9px;background:#04201a"></div>
<div style="position:absolute;left:1235.0000000000002px;top:717px;width:1.6px;height:19px;background:#04201a"></div>
<div style="position:absolute;left:1253.26px;top:727px;width:1.6px;height:9px;background:#04201a"></div>
<div style="position:absolute;left:1271.5200000000002px;top:727px;width:1.6px;height:9px;background:#04201a"></div>
<div style="position:absolute;left:1289.78px;top:727px;width:1.6px;height:9px;background:#04201a"></div>
<div style="position:absolute;left:1308.0400000000002px;top:727px;width:1.6px;height:9px;background:#04201a"></div>
<div style="position:absolute;left:1326.3000000000002px;top:727px;width:1.6px;height:9px;background:#04201a"></div>
<div style="position:absolute;left:1344.5600000000002px;top:727px;width:1.6px;height:9px;background:#04201a"></div>
<div style="position:absolute;left:1362.8200000000002px;top:727px;width:1.6px;height:9px;background:#04201a"></div>
<div style="position:absolute;left:1381.0800000000002px;top:727px;width:1.6px;height:9px;background:#04201a"></div>
<div style="position:absolute;left:1399.3400000000001px;top:727px;width:1.6px;height:9px;background:#04201a"></div>
<div style="position:absolute;left:1417.6000000000001px;top:717px;width:1.6px;height:19px;background:#04201a"></div>
<div style="position:absolute;left:1435.8600000000001px;top:727px;width:1.6px;height:9px;background:#04201a"></div>
<div style="position:absolute;left:1454.1200000000001px;top:727px;width:1.6px;height:9px;background:#04201a"></div>
<div style="position:absolute;left:1472.38px;top:727px;width:1.6px;height:9px;background:#04201a"></div>
<div style="position:absolute;left:1490.64px;top:727px;width:1.6px;height:9px;background:#04201a"></div>
<div style="position:absolute;left:1508.9px;top:727px;width:1.6px;height:9px;background:#04201a"></div>
<svg style="position:absolute;left:926px;top:716px" width="11" height="21"><path d="M9,2 L4,2 L4,19 L9,19" fill="none" stroke="#000" stroke-width="5"/><path d="M9,2 L4,2 L4,19 L9,19" fill="none" stroke="#fff" stroke-width="3"/></svg>
<svg style="position:absolute;left:1132px;top:716px" width="11" height="21"><path d="M2,2 L7,2 L7,19 L2,19" fill="none" stroke="#000" stroke-width="5"/><path d="M2,2 L7,2 L7,19 L2,19" fill="none" stroke="#fff" stroke-width="3"/></svg>
<div style="position:absolute;left:1202px;top:717px;width:3px;height:19px;background:#40f0a0"></div>
<div style="position:absolute;left:1524px;top:717px;width:12px;height:18px;background:#7a7a7a;border-radius:3px"></div>
<div style="position:absolute;left:860px;top:743px;width:661px;height:31px;background:#2c2c2c"></div>
<div style="position:absolute;left:1524px;top:743px;width:12px;height:31px;background:#2c2c2c"></div>
<svg style="position:absolute;left:874px;top:747px" width="26" height="21"><rect x="1.5" y="1.5" width="23" height="18" rx="2" fill="none" stroke="#8c8c8c" stroke-width="1.8"/><rect x="4" y="4" width="3" height="2" fill="#8c8c8c"/><rect x="9" y="4" width="13" height="2" fill="#8c8c8c"/><path d="M5.5,7 L5.5,17" stroke="#8c8c8c" stroke-width="2" stroke-dasharray="1.5 1"/><rect x="9" y="8" width="13" height="2" fill="#8c8c8c"/><rect x="9" y="11.5" width="13" height="2" fill="#8c8c8c"/><rect x="9" y="15" width="13" height="2" fill="#8c8c8c"/></svg>
<svg style="position:absolute;left:985px;top:751px" width="19" height="13"><polygon points="0,6.5 11,0.5 11,12.5" fill="#8c8c8c"/><rect x="13" y="0.5" width="3" height="12" fill="#8c8c8c"/></svg>
<svg style="position:absolute;left:1040px;top:751px" width="19" height="13"><rect x="0.5" y="0.5" width="3" height="12" fill="#8c8c8c"/><polygon points="18,6.5 6,0.5 6,12.5" fill="#8c8c8c"/></svg>
<svg style="position:absolute;left:1097px;top:749px" width="11" height="17"><path d="M1,1.5 L8,1.5 L8,15 L1,15" fill="none" stroke="#8c8c8c" stroke-width="3"/></svg>
<svg style="position:absolute;left:1182px;top:750px" width="16" height="15"><polygon points="0,0.5 15,7.5 0,14.5" fill="#8c8c8c"/></svg>
<svg style="position:absolute;left:1272px;top:749px" width="11" height="18"><path d="M10,1.5 L3,1.5 L3,16 L10,16" fill="none" stroke="#8c8c8c" stroke-width="3"/></svg>
<svg style="position:absolute;left:1321px;top:747px" width="21" height="21"><rect x="1.5" y="1.5" width="18" height="18" rx="3" fill="none" stroke="#8c8c8c" stroke-width="3"/><path d="M5.5,5.5 L9,5.5 L9,15.5 L5.5,15.5 M15.5,5.5 L12,5.5 L12,15.5 L15.5,15.5" fill="none" stroke="#8c8c8c" stroke-width="2.4"/></svg>
<svg style="position:absolute;left:1381px;top:751px" width="8" height="14"><ellipse cx="4" cy="7" rx="3" ry="6" fill="#2a1010"/><ellipse cx="4" cy="7" rx="2" ry="5" fill="#d82a1a"/></svg>
<svg style="position:absolute;left:1427px;top:748px" width="24" height="20"><path d="M3,7 L14,7" stroke="#e2d020" stroke-width="5"/><polygon points="12,1 20,7 12,13" fill="#e2d020"/><rect x="1" y="14" width="10" height="5" rx="1" fill="#8a8a8a"/><rect x="13" y="14" width="10" height="5" rx="1" fill="#8a8a8a"/></svg>
<svg style="position:absolute;left:1481px;top:748px" width="24" height="20"><path d="M4,7 L15,7" stroke="#e03040" stroke-width="5"/><polygon points="13,1 21,7 13,13" fill="#e03040"/><rect x="1" y="14" width="22" height="5" rx="1" fill="#8a8a8a"/></svg>
<div style="position:absolute;left:860px;top:774px;width:676px;height:15px;background:#1d1d1d"></div>
<div style="position:absolute;left:860px;top:789px;width:676px;height:31px;background:#2e2e2e"></div>
<div style="position:absolute;left:854px;top:789px;width:42px;height:31px;background:#8a6a0c"></div>
<div style="position:absolute;left:1025px;top:789px;width:2px;height:31px;background:#1c1c1c"></div>
<div style="position:absolute;left:1156px;top:789px;width:44px;height:31px;background:#8a6a0c"></div>
<div style="position:absolute;left:1376px;top:789px;width:2px;height:31px;background:#1c1c1c"></div>
<svg style="position:absolute;left:860px;top:796px" width="28" height="19"><path d="M1,4.5 L26,4.5 M1,13.5 L26,13.5" stroke="#d6c8a0" stroke-width="2"/><circle cx="9" cy="4.5" r="3.3" fill="#8a6a0c" stroke="#d6c8a0" stroke-width="1.8"/><circle cx="17" cy="13.5" r="3.3" fill="#8a6a0c" stroke="#d6c8a0" stroke-width="1.8"/></svg>
<svg style="position:absolute;left:904px;top:797px" width="26" height="17"><path d="M1,5 L4,5 M1,8.5 L4,8.5 M1,12 L4,12" stroke="#8c8c8c" stroke-width="1.5"/><polygon points="9,1.5 25,1.5 22,15.5 6,15.5" fill="none" stroke="#8c8c8c" stroke-width="2"/><path d="M9,4.5 L23,4.5 M7,12.5 L21,12.5" stroke="#8c8c8c" stroke-width="1.3" stroke-dasharray="1.5 1"/></svg>
<svg style="position:absolute;left:948px;top:794px" width="28" height="22"><path d="M1,1.5 L20,1.5 L20,8 L18,8 L17,5 L12.5,5 L12.5,17 L15.5,18 L15.5,20 L5.5,20 L5.5,18 L8.5,17 L8.5,5 L4,5 L3,8 L1,8 Z" fill="#8c8c8c"/></svg>
<svg style="position:absolute;left:964px;top:805px" width="10" height="10"><path d="M5,1 L5,9 M1,5 L9,5" stroke="#8c8c8c" stroke-width="1.8"/></svg>
<svg style="position:absolute;left:991px;top:794px" width="24" height="23"><defs><linearGradient id="dg" x1="0" x2="1"><stop offset="0.55" stop-color="#7a7a7a"/><stop offset="1" stop-color="#9a9a9a"/></linearGradient></defs><rect x="1" y="1.5" width="22" height="20" rx="3" fill="url(#dg)"/><g fill="none" stroke="#262626" stroke-width="1.6"><path d="M4,4 L8,7 L4,10 L8,13 L4,16 L8,19"/><path d="M9,4 L13,7 L9,10 L13,13 L9,16 L13,19"/><path d="M8,4 L4,7 L8,10 L4,13 L8,16 L4,19"/></g><rect x="3" y="3" width="11" height="17" fill="#262626" opacity="0.25"/></svg>
<svg style="position:absolute;left:1035px;top:797px" width="28" height="16"><polygon points="1,4 7,8 1,12" fill="#8c8c8c"/><rect x="8.5" y="1.5" width="18" height="13" fill="none" stroke="#8c8c8c" stroke-width="1.8"/><path d="M9,3.5 L26,3.5 M9,12.5 L26,12.5" stroke="#8c8c8c" stroke-width="1.4" stroke-dasharray="1.5 1"/></svg>
<svg style="position:absolute;left:1081px;top:794px" width="22" height="22"><circle cx="11" cy="11" r="8.5" fill="none" stroke="#8c8c8c" stroke-width="2.4"/><path d="M5.5,16.5 L16.5,5.5" stroke="#8c8c8c" stroke-width="2.4"/></svg>
<svg style="position:absolute;left:1123px;top:798px" width="24" height="14"><path d="M1,3 L5,2 L8,11 L16,11 L19,2 L23,3" fill="none" stroke="#8c8c8c" stroke-width="2.4"/></svg>
<svg style="position:absolute;left:1164px;top:794px" width="28" height="22"><polygon points="7,1 13,10 1,10" fill="#d6c8a0"/><polygon points="20,10 26,20 14,20" fill="#d6c8a0"/><path d="M9,8 L19,14" stroke="#d6c8a0" stroke-width="1.6"/></svg>
<div style="position:absolute;left:854px;top:820px;width:682px;height:29px;background:#141414"></div>
<div style="position:absolute;left:854px;top:849px;width:682px;height:15px;background:#47235a"></div>
<div style="position:absolute;left:855px;top:830.1px;height:21px;line-height:21px;font-size:15px;font-weight:normal;color:#ececec;white-space:nowrap;-webkit-text-stroke:0.35px #ececec">00</div>
<div style="position:absolute;left:1061px;top:830.1px;height:21px;line-height:21px;font-size:15px;font-weight:normal;color:#ececec;white-space:nowrap;-webkit-text-stroke:0.35px #ececec">01:15:00:00</div>
<div style="position:absolute;left:1328px;top:830.1px;height:21px;line-height:21px;font-size:15px;font-weight:normal;color:#ececec;white-space:nowrap;-webkit-text-stroke:0.35px #ececec">01:20:00:00</div>
<div style="position:absolute;left:1108px;top:823px;width:2px;height:7px;background:#dcdcdc"></div>
<div style="position:absolute;left:1376px;top:825px;width:2px;height:6px;background:#dcdcdc"></div>
<svg style="position:absolute;left:1089px;top:827px" width="14" height="20"><path d="M2,2.5 L8.5,2.5 L8.5,16.5 L2,16.5" fill="none" stroke="#000" stroke-width="5"/><path d="M2,2.5 L8.5,2.5 L8.5,16.5 L2,16.5" fill="none" stroke="#fff" stroke-width="3"/><rect x="7" y="3" width="4" height="13" fill="#fff"/></svg>
<div style="position:absolute;left:1280px;top:823px;width:2px;height:41px;background:#2ab0d8"></div>
</body></html>
